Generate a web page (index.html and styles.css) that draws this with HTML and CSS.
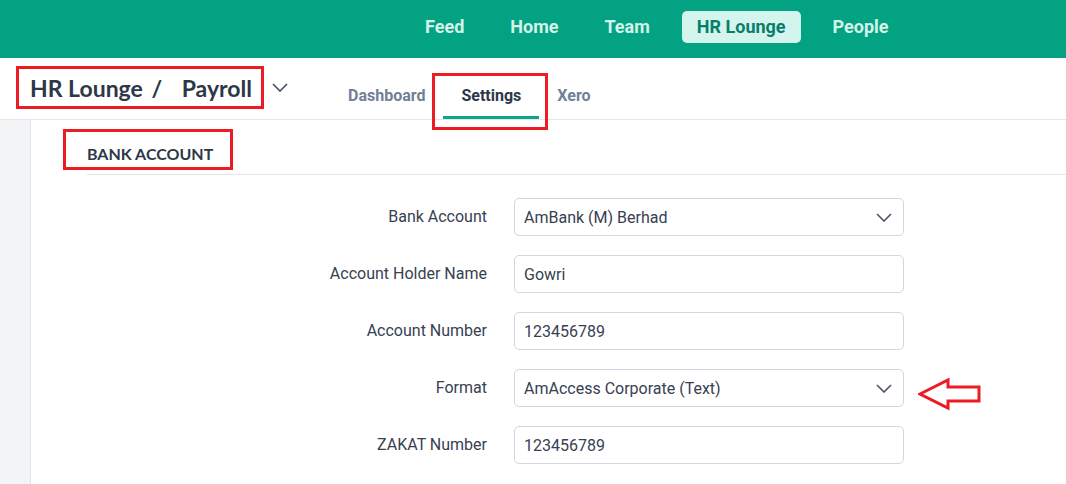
FILE: index.html
```html
<!DOCTYPE html>
<html>
<head>
    <meta charset="UTF-8">
    <title>HR Lounge - Payroll Settings</title>
    <link rel="stylesheet" href="styles.css">
</head>
<body>

    <header class="topbar">
        <nav class="main-nav">
            <a class="nav-link" href="#">Feed</a>
            <a class="nav-link" href="#">Home</a>
            <a class="nav-link" href="#">Team</a>
            <a class="nav-link active" href="#">HR Lounge</a>
            <a class="nav-link" href="#">People</a>
        </nav>
    </header>

    <div class="subheader">
        <div class="crumbs mark">
            <span>HR Lounge</span>
            <span class="sep">/</span>
            <span>Payroll</span>
        </div>
        <svg class="crumb-toggle" width="16" height="9" viewBox="0 0 16 9">
            <polyline points="1,1 8,8 15,1" fill="none" stroke="#4b5563" stroke-width="1.7"/>
        </svg>
        <div class="tabs">
            <a class="tab" href="#">Dashboard</a>
            <a class="tab current" href="#">Settings</a>
            <a class="tab" href="#">Xero</a>
        </div>
    </div>

    <div class="page">
        <aside class="sidebar"></aside>
        <main class="content">
            <h3 class="section-title"><span class="title-text">BANK ACCOUNT</span></h3>

            <form class="bank-form">
                <label class="field-label">Bank Account</label>
                <div class="field select">
                    <span>AmBank (M) Berhad</span>
                    <svg width="16" height="9" viewBox="0 0 16 9"><polyline points="1,1 8,8 15,1" fill="none" stroke="#4b5563" stroke-width="1.6"/></svg>
                </div>

                <label class="field-label">Account Holder Name</label>
                <div class="field"><span>Gowri</span></div>

                <label class="field-label">Account Number</label>
                <div class="field"><span>123456789</span></div>

                <label class="field-label">Format</label>
                <div class="field select">
                    <span>AmAccess Corporate (Text)</span>
                    <svg width="16" height="9" viewBox="0 0 16 9"><polyline points="1,1 8,8 15,1" fill="none" stroke="#4b5563" stroke-width="1.6"/></svg>
                    <svg class="pointer" width="64" height="34" viewBox="0 0 64 34">
                        <polygon points="2,17 30,3 30,10 61,10 61,24 30,24 30,31" fill="none" stroke="#ed1c24" stroke-width="3"/>
                    </svg>
                </div>

                <label class="field-label">ZAKAT Number</label>
                <div class="field"><span>123456789</span></div>
            </form>
        </main>
    </div>

</body>
</html>
```

FILE: styles.css
```css
body {
    margin: 0;
    padding: 0;
    font-family: Roboto, "Liberation Sans", sans-serif;
    background-color: #ffffff;
    color: #374151;
}

a {
    text-decoration: none;
}

/* top green bar */
.topbar {
    height: 58px;
    box-sizing: border-box;
    background-color: #03a282;
    display: flex;
    align-items: flex-start;
    padding: 11px 0 0 411px;
}

.main-nav {
    display: flex;
    gap: 18px;
}

.nav-link {
    font-size: 18px;
    font-weight: 700;
    color: #d3f3e9;
    padding: 0 14px;
    height: 32px;
    line-height: 31px;
    border-radius: 5px;
}

.nav-link.active {
    background-color: #d3f5ee;
    color: #077e6a;
    padding: 0 15px;
}

/* breadcrumb + tabs */
.subheader {
    height: 61px;
    border-bottom: 1px solid #e3e6ea;
    display: flex;
    align-items: center;
    padding-left: 16px;
}

.crumbs {
    font-family: Lato, "Liberation Sans", sans-serif;
    font-size: 23px;
    font-weight: 700;
    color: #2d3748;
    padding: 0 9px 0 11px;
    height: 37px;
    line-height: 39px;
    margin-top: -2px;
}

.mark {
    border: 3px solid #ed1c24;
}

.crumbs .sep {
    margin: 0 14px 0 3px;
}

.crumb-toggle {
    margin-left: 8px;
    margin-top: -2px;
}

.tabs {
    display: flex;
    align-self: flex-end;
    margin-left: 42px;
}

.tab {
    font-size: 16px;
    font-weight: 700;
    color: #718096;
    line-height: 20px;
    padding: 0 18px 10px;
    border-bottom: 3px solid transparent;
}

.tab.current {
    color: #2d3748;
    border-bottom-color: #0ea68a;
    position: relative;
}

.tab.current::after {
    content: "";
    position: absolute;
    left: -11px;
    right: -9px;
    top: -13px;
    bottom: -14px;
    border: 3px solid #ed1c24;
}

/* body */
.page {
    display: flex;
    min-height: calc(100vh - 120px);
}

.sidebar {
    width: 30px;
    background-color: #f3f4f6;
    border-right: 1px solid #e2e5e9;
}

.content {
    flex: 1;
    padding-top: 24px;
}

.section-title {
    margin: 0 0 0 56px;
    font-family: Lato, "Liberation Sans", sans-serif;
    font-size: 16px;
    font-weight: 700;
    color: #2d3748;
    line-height: 20px;
    padding-bottom: 10px;
    border-bottom: 1px solid #e3e6ea;
}

.title-text {
    display: inline-block;
    position: relative;
}

.title-text::after {
    content: "";
    position: absolute;
    left: -24px;
    right: -20px;
    top: -15px;
    bottom: -6px;
    border: 3px solid #ed1c24;
}

.bank-form {
    display: grid;
    grid-template-columns: 456px 390px;
    column-gap: 27px;
    row-gap: 19px;
    margin-top: 23px;
}

.field-label {
    font-size: 16px;
    text-align: right;
    line-height: 38px;
    color: #374151;
}

.field {
    height: 36px;
    border: 1px solid #d3d6dc;
    border-radius: 5px;
    padding: 0 11px 0 9px;
    display: flex;
    align-items: center;
    justify-content: space-between;
    font-size: 16px;
    color: #374151;
}

.select {
    position: relative;
}

.pointer {
    position: absolute;
    left: calc(100% + 15px);
    top: 7px;
}
```
